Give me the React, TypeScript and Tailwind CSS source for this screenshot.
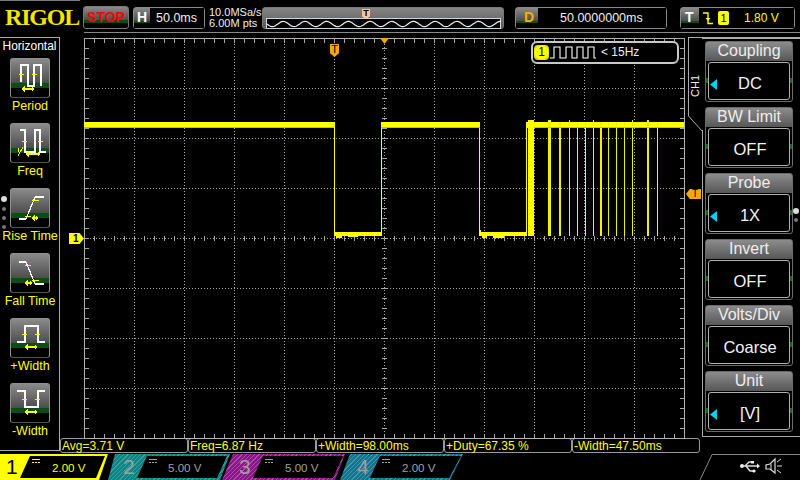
import type { ReactNode } from "react";

const GRAD =
  "bg-[linear-gradient(#8a8a8a_0,#4c4c4c_64%,#0b4d12_64%,#0b4d12_76%,#000_76%)]";

function Arrow({ x1, x2, y }: { x1: number; x2: number; y: number }) {
  return (
    <g fill="#ffff00" stroke="none">
      <rect x={x1 + 1} y={y - 1} width={x2 - x1 - 2} height={2} />
      <path d={`M${x1} ${y} l3.5 -3 v6 z M${x2} ${y} l-3.5 -3 v6 z`} />
    </g>
  );
}

function Marks({ y, xs, w = 5 }: { y: number; xs: number[]; w?: number }) {
  return (
    <g fill="#ffff00" stroke="none">
      {xs.map((x) => (
        <rect key={x} x={x} y={y} width={w} height={1} />
      ))}
    </g>
  );
}

const ICONS: Record<string, ReactNode> = {
  Period: (
    <>
      <path d="M11 24V7H18V28H24V7H31V28" />
      <Marks y={16} xs={[9, 22]} />
      <Arrow x1={11} x2={25} y={31} />
    </>
  ),
  Freq: (
    <>
      <path d="M10 7H15V29H25V7H30V29H36" />
      <Marks y={18} xs={[12, 28]} />
      <path d="M8 25V29M13 24L8 33" stroke="#ffff00" strokeWidth={1} fill="none" />
      <Arrow x1={15} x2={31} y={31} />
    </>
  ),
  Rise: (
    <>
      <path d="M9 31H16L25 9H34" />
      <Marks y={12} xs={[22]} w={7} />
      <Marks y={28} xs={[15]} w={6} />
      <Arrow x1={21} x2={29} y={30} />
    </>
  ),
  Fall: (
    <>
      <path d="M9 9H16L25 31H34" />
      <Marks y={12} xs={[15]} w={6} />
      <Marks y={27} xs={[22]} w={7} />
      <Arrow x1={14} x2={23} y={30} />
    </>
  ),
  PWidth: (
    <>
      <path d="M7 24H15V8H28V24H35" />
      <Marks y={16} xs={[12, 25]} />
      <Arrow x1={14} x2={28} y={29} />
    </>
  ),
  NWidth: (
    <>
      <path d="M7 8H15V24H28V8H35" />
      <Marks y={16} xs={[12, 25]} />
      <Arrow x1={14} x2={28} y={29} />
    </>
  ),
};

const MEASURES = [
  { icon: "Period", label: "Period" },
  { icon: "Freq", label: "Freq" },
  { icon: "Rise", label: "Rise Time" },
  { icon: "Fall", label: "Fall Time" },
  { icon: "PWidth", label: "+Width" },
  { icon: "NWidth", label: "-Width" },
];

function MeasureButton({ icon, label }: { icon: string; label: string }) {
  return (
    <div className="flex h-[65px] flex-col items-center">
      <div className={`h-10 w-10 rounded-[3px] border border-[#8f8f8f] border-b-[#4a5a4a] ${GRAD}`}>
        <svg width="38" height="38" viewBox="1 1 38 38" fill="none" stroke="#fff" strokeWidth={1.2} shapeRendering="crispEdges">
          {ICONS[icon]}
        </svg>
      </div>
      <div className="text-[12.5px] leading-[16px] whitespace-nowrap text-[#ffff00]">{label}</div>
    </div>
  );
}

function SideButton({ title, value, arrow }: { title: string; value: string; arrow?: boolean }) {
  return (
    <div className="relative flex h-[61px] w-[88px] flex-col rounded-[3px] border border-[#6a6a6a] bg-[linear-gradient(#8c8c8c_0,#555_33%,#000_33%)]">
      <div className="h-[20px] text-center text-[16px] leading-[18px] text-[#eee]">{title}</div>
      <div className="relative mx-[2px] flex h-[38px] items-center justify-center rounded-[3px] border border-[#b0b0b0] bg-black pt-[5px] pl-[2px] text-[16.5px] text-[#f2f2f2]">
        {arrow && <div className="absolute top-[16px] left-[1px] h-[11px] w-[7px] bg-[#00d2f2] [clip-path:polygon(100%_0,100%_100%,0_50%)]" />}
        {value}
      </div>
      <div className="absolute top-[36px] left-0 h-[5px] w-[2px] bg-[#0b6d12]" />
      <div className="absolute top-[36px] right-0 h-[5px] w-[2px] bg-[#0b6d12]" />
    </div>
  );
}

function Scope() {
  const xs = Array.from({ length: 61 }, (_, i) => 84 + i * 10);
  const ys = Array.from({ length: 41 }, (_, i) => 38 + i * 10);
  const edges: [number, number, number][] = [
    [548, 3, 120],
    [559, 2, 122],
    [569, 1, 120],
    [577, 1, 122],
    [585, 1, 122],
    [593, 1, 120],
    [600, 2, 122],
    [608, 1, 122],
    [616, 1, 122],
    [624, 1, 122],
    [632, 1, 120],
    [647, 2, 120],
    [657, 1, 122],
  ];
  return (
    <svg width="604" height="401" viewBox="84 38 604 401" shapeRendering="crispEdges" className="block">
      <g stroke="#a8a8a8" strokeWidth={1} strokeDasharray="1 2">
        {[134, 184, 234, 284, 334, 384, 434, 484, 534, 584, 634].map((x) => (
          <line key={x} x1={x + 0.5} y1={38} x2={x + 0.5} y2={438} />
        ))}
        {[88, 138, 188, 238, 288, 338, 388].map((y) => (
          <line key={y} x1={84} y1={y + 0.5} x2={684} y2={y + 0.5} />
        ))}
      </g>
      <g stroke="#a8a8a8" strokeWidth={1}>
        <path d="M84.5 38V438.5H684.5V38.5H84.5" fill="none" stroke="#b4b4b4" />
        {xs.map((x) => (
          <g key={x}>
            <line x1={x + 0.5} y1={38} x2={x + 0.5} y2={43} />
            <line x1={x + 0.5} y1={434} x2={x + 0.5} y2={438} />
            <line x1={x + 0.5} y1={236} x2={x + 0.5} y2={241} />
          </g>
        ))}
        {ys.map((y) => (
          <g key={y}>
            <line x1={84} y1={y + 0.5} x2={89} y2={y + 0.5} />
            <line x1={680} y1={y + 0.5} x2={684} y2={y + 0.5} />
            <line x1={382} y1={y + 0.5} x2={387} y2={y + 0.5} />
          </g>
        ))}
      </g>
      <g fill="#ffff00">
        <rect x={84} y={122} width={250} height={6} />
        <rect x={381} y={122} width={99} height={6} />
        <rect x={526} y={122} width={158} height={6} />
        <rect x={334} y={232} width={48} height={4} />
        <rect x={479} y={232} width={48} height={4} />
        <rect x={334} y={122} width={1} height={114} />
        <rect x={381} y={122} width={1} height={114} />
        <rect x={479} y={122} width={1} height={114} />
        <rect x={526} y={122} width={1} height={114} />
        <rect x={528} y={120} width={6} height={116} />
        {/* little spikes left by the acquisition along the low level */}
        <rect x={336} y={236} width={6} height={2} />
        <rect x={348} y={236} width={10} height={1} />
        <rect x={482} y={236} width={5} height={2} />
        <rect x={493} y={236} width={11} height={2} />
        <rect x={479} y={230} width={2} height={2} />
        {edges.map(([x, w, top]) => (
          <rect key={x} x={x} y={top} width={w} height={236 - top} fill="#f2f200" />
        ))}
      </g>
      <g fill="#c8c800">
        <rect x={84} y={127} width={250} height={1} />
        <rect x={381} y={127} width={99} height={1} />
        <rect x={534} y={127} width={150} height={1} />
      </g>
    </svg>
  );
}

function Wave() {
  const pts = Array.from({ length: 236 }, (_, i) => `${i},${(5 + 2.6 * Math.sin((i * 2 * Math.PI) / 21.7)).toFixed(1)}`);
  return (
    <svg width="234" height="9" className="block">
      <polyline points={pts.join(" ")} fill="none" stroke="#f0f0f0" strokeWidth={1.2} />
    </svg>
  );
}

const CH_TABS = [
  {
    digit: "1",
    value: "2.00 V",
    box: "w-[108px] bg-[#ffff00] [clip-path:polygon(0_0,108px_0,99px_26px,0_26px)]",
    digitBox: "w-[20px] pl-[6px] text-black",
    inner: "w-[85px] [clip-path:polygon(10px_0,85px_0,76px_100%,0_100%)]",
    text: "ml-[12px] text-[#ffff00]",
    dc: "#ffff00",
  },
  {
    digit: "2",
    value: "5.00 V",
    box: "w-[122px] bg-[repeating-linear-gradient(135deg,#0c8484_0,#0c8484_2px,#3f9f9f_2px,#3f9f9f_3px)] [clip-path:polygon(7px_0,122px_0,112px_26px,0_26px)]",
    digitBox: "w-[29px] pl-[15px] text-[#a0a0a0]",
    inner: "w-[90px] [clip-path:polygon(10px_0,90px_0,80px_100%,0_100%)]",
    text: "ml-[11px] text-[#a0a0a0]",
    dc: "#a0a0a0",
  },
  {
    digit: "3",
    value: "5.00 V",
    box: "-ml-[8px] w-[123px] bg-[repeating-linear-gradient(135deg,#8a1488_0,#8a1488_2px,#a850a6_2px,#a850a6_3px)] [clip-path:polygon(11px_0,123px_0,113px_26px,0_26px)]",
    digitBox: "w-[31px] pl-[17px] text-[#a0a0a0]",
    inner: "w-[90px] [clip-path:polygon(10px_0,90px_0,80px_100%,0_100%)]",
    text: "ml-[12px] text-[#a0a0a0]",
    dc: "#a0a0a0",
  },
  {
    digit: "4",
    value: "2.00 V",
    box: "-ml-[5px] w-[123px] bg-[repeating-linear-gradient(135deg,#11748f_0,#11748f_2px,#4a94aa_2px,#4a94aa_3px)] [clip-path:polygon(10px_0,123px_0,110px_26px,0_26px)]",
    digitBox: "w-[30px] pl-[17px] text-[#a0a0a0]",
    inner: "w-[91px] [clip-path:polygon(10px_0,91px_0,79px_100%,0_100%)]",
    text: "ml-[12px] text-[#a0a0a0]",
    dc: "#a0a0a0",
  },
];

export default function App() {
  return (
    <div className="relative flex h-[480px] w-[800px] flex-col overflow-hidden bg-black font-['Liberation_Sans',Arial,sans-serif] text-white">
      {/* top bar */}
      <div className="flex h-[32px] items-start">
        <div className="h-[32px] w-[80px] border-t border-[#777] pl-[5px] font-['Liberation_Serif',serif] text-[24px] leading-[33px] font-bold tracking-[-1.2px] text-[#f4e400]">
          RIGOL
        </div>
        <div className="mt-[6px] ml-[3px] h-[23px] w-[46px] rounded-[3px] border border-[#777] bg-[linear-gradient(#8a8a8a_0,#4c4c4c_62%,#0b4d12_62%,#0b4d12_78%,#000_78%)] text-center text-[14px] leading-[20px] font-bold text-[#ff0000]">
          STOP
        </div>
        <div className="mt-[7px] ml-[4px] flex h-[22px] w-[72px] rounded-[3px] border border-[#888]">
          <div className={`w-[16px] pl-[3px] text-[14px] leading-[19px] font-bold ${GRAD}`}>H</div>
          <div className="flex-1 rounded-tl-[4px] bg-black pl-[6px] text-[12.5px] leading-[20px] text-[#eee]">50.0ms</div>
        </div>
        <div className="mt-[7px] ml-[4px] w-[53px] text-[11px] leading-[11px] whitespace-nowrap text-[#eee]">
          10.0MSa/s
          <br />
          6.00M pts
        </div>
        <div className="relative mt-[7px] h-[22px] w-[242px] rounded-[3px] border border-[#777] bg-[linear-gradient(#858585,#5a5a5a)] px-[3px] pt-[10px]">
          <div className="w-[235px] border border-[#c0d8e8] bg-black">
            <Wave />
          </div>
          <div className="absolute top-[1px] left-[99px] h-[10px] w-[8px] bg-[#ffbf9f] text-center text-[9px] leading-[9px] font-bold text-black [clip-path:polygon(0_0,100%_0,100%_75%,50%_100%,0_75%)]">
            T
          </div>
        </div>
        <div className="mt-[7px] ml-[11px] flex h-[22px] w-[152px] rounded-[3px] border border-[#888]">
          <div className={`w-[22px] pl-[8px] text-[14px] leading-[19px] font-bold text-[#f5b000] ${GRAD}`}>D</div>
          <div className="flex-1 rounded-tl-[4px] bg-black pl-[22px] text-[12.5px] leading-[20px] text-[#eee]">50.0000000ms</div>
        </div>
        <div className="mt-[7px] ml-[13px] flex h-[22px] w-[115px] rounded-[3px] border border-[#888]">
          <div className={`w-[18px] pl-[4px] text-[14px] leading-[19px] font-bold ${GRAD}`}>T</div>
          <div className="flex flex-1 items-center rounded-tl-[4px] bg-black pl-[3px]">
            <svg width="12" height="14" viewBox="0 0 12 14" fill="none" stroke="#ffff00" strokeWidth={1.4}>
              <path d="M1 2H6V12.5H11" />
              <path d="M3.5 7H8.5L6 10Z" fill="#ffff00" stroke="none" />
            </svg>
            <div className="ml-[4px] h-[14px] w-[11px] rounded-[2px] bg-[#ffff00] text-center text-[11px] leading-[14px] text-black">1</div>
            <div className="ml-[15px] text-[12px] leading-[20px] text-[#ffff00]">1.80 V</div>
          </div>
        </div>
      </div>
      <div className="ml-[84px] h-px bg-[#888]" />

      {/* body */}
      <div className="mt-[4px] flex h-[417px]">
        <div className="relative h-[414px] w-[60px] border-t border-r border-b border-[#aaa]">
          <div className="h-[20px] text-center text-[12px] leading-[17px] text-white">Horizontal</div>
          {MEASURES.map((m) => (
            <div key={m.icon} className="pl-[1px]">
              <MeasureButton icon={m.icon} label={m.label} />
            </div>
          ))}
          <div className="absolute top-[158px] left-[1px] flex flex-col items-center gap-[5px]">
            <div className="h-[6px] w-[6px] rounded-full bg-[#ddd]" />
            <div className="h-[4px] w-[4px] rounded-full bg-[#777]" />
            <div className="h-[4px] w-[4px] rounded-full bg-[#777]" />
            <div className="h-[4px] w-[4px] rounded-full bg-[#777]" />
          </div>
        </div>

        <div className="w-[628px]">
          <div className="relative mt-px ml-[24px] h-[400px] w-[604px]">
            <Scope />
            {/* trigger markers */}
            <div className="absolute top-[6px] left-[246px] h-[13px] w-[9px] bg-[#f5a800] text-center text-[11px] leading-[11px] text-black [clip-path:polygon(0_0,100%_0,100%_72%,50%_100%,0_72%)]">
              T
            </div>
            <div className="absolute top-0 left-[296px] h-[6px] w-[9px] bg-[#f5a800] [clip-path:polygon(0_0,100%_0,50%_100%)]" />
            <div className="absolute top-[195px] left-[-15px] h-[11px] w-[15px] bg-[#ffff00] pl-[4px] text-[10px] leading-[11px] font-bold text-black [clip-path:polygon(0_0,70%_0,100%_50%,70%_100%,0_100%)]">
              1
            </div>
            <div className="absolute top-[151px] left-[602px] z-10 h-[10px] w-[15px] bg-[#f5a800] pl-[6px] text-[10px] leading-[10px] text-black [clip-path:polygon(25%_0,100%_0,100%_100%,25%_100%,0_50%)]">
              T
            </div>
            {/* frequency counter pill */}
            <div className="absolute top-[3px] left-[447px] flex h-[23px] w-[148px] items-center rounded-[6px] border-2 border-[#c8c8c8] bg-black pl-[1px]">
              <div className="h-[15px] w-[15px] rounded-[4px] bg-[radial-gradient(#ffff00_55%,#b8b800)] text-center text-[12px] leading-[15px] text-black">1</div>
              <svg width="46" height="13" viewBox="0 0 46 13" fill="none" stroke="#fff" strokeWidth={1.1} className="ml-px">
                <path d="M0 12H4V1H10V12H16V1H22V12H27V1H33V12H38V1H44V12H46" />
              </svg>
              <div className="ml-[5px] text-[12px] leading-[15px] whitespace-pre text-[#eee]">{"< 15Hz"}</div>
            </div>
          </div>
          {/* measurements */}
          <div className="flex w-[640px]">
            {["Avg=3.71 V", "Freq=6.87 Hz", "+Width=98.00ms", "+Duty=67.35 %", "-Width=47.50ms"].map((t) => (
              <div key={t} className="h-[15px] w-[128px] flex-none rounded-[3px] border border-[#999] bg-black pl-px text-[12px] leading-[14px] text-[#ffff00]">
                {t}
              </div>
            ))}
          </div>
        </div>

        <div className="relative flex h-[401px] w-[112px] flex-none">
          <div className="relative w-[14px]">
            <svg width="14" height="401" className="absolute top-0 left-0" fill="none" stroke="#aaa">
              <path d="M0.5 0V79L14 94" />
            </svg>
            <div className="absolute top-[45px] left-[-1px] w-[16px] rotate-[-90deg] text-center text-[11px] leading-[14px] text-[#eee]">CH1</div>
          </div>
          <div className="mt-px flex-1 border-t border-[#aaa]" />
          <div className="absolute top-0 left-[14px] h-[400px] w-[98px]">
            <div className="absolute top-0 right-0 left-[-14px] h-px bg-[#aaa]" />
            <div className="flex h-[400px] flex-col gap-[5px] border-b border-[#aaa] pt-[4px] pl-[3px]">
              <SideButton title="Coupling" value="DC" arrow />
              <SideButton title="BW Limit" value="OFF" />
              <SideButton title="Probe" value="1X" arrow />
              <SideButton title="Invert" value="OFF" />
              <SideButton title="Volts/Div" value="Coarse" />
              <SideButton title="Unit" value="[V]" arrow />
            </div>
            <div className="absolute top-[93px] left-0 h-[307px] w-px bg-[#aaa]" />
            <div className="absolute top-[171px] right-[1px] flex flex-col items-center gap-[4px]">
              <div className="h-[6px] w-[6px] rounded-full bg-[#ddd]" />
              <div className="h-[4px] w-[4px] rounded-full bg-[#777]" />
            </div>
          </div>
        </div>
      </div>

      {/* channel tabs */}
      <div className="flex h-[26px]">
        {CH_TABS.map((c) => (
          <div key={c.digit} className={`flex h-[26px] flex-none ${c.box}`}>
            <div className={`flex-none text-[21px] leading-[26px] ${c.digitBox}`}>{c.digit}</div>
            <div className={`my-[2px] flex h-[22px] flex-none bg-black ${c.inner}`}>
              <svg width="8" height="5" className="mt-[3px] ml-[12px] flex-none" fill="none" stroke={c.dc}>
                <path d="M0 0.5H8" />
                <path d="M0 3.5H8" strokeDasharray="2 1" />
              </svg>
              <div className={`text-[11.6px] leading-[24px] whitespace-nowrap ${c.text}`}>{c.value}</div>
            </div>
          </div>
        ))}
        <svg width="105" height="26" viewBox="695 454 105 26" className="mr-0 ml-auto" fill="none" stroke="#ddd">
          <path d="M700 480L712 454.5H800" stroke="#888" />
          <g strokeWidth={1.4}>
            <circle cx={742} cy={466} r={2} fill="#eee" stroke="none" />
            <path d="M742 466H757M745 466L749 462H752M746 466L750 471H753" />
            <path d="M757 463.5L760 466L757 468.5Z" fill="#eee" stroke="none" />
            <rect x={751} y={461} width={3} height={2.5} fill="#eee" stroke="none" />
            <circle cx={754} cy={471} r={1.6} fill="#eee" stroke="none" />
          </g>
          <path d="M766 465V469L770 469L775 473V459L770 464Z" strokeWidth={1.2} />
          <path d="M771 464V470" strokeWidth={1} />
          <path d="M777 462L781 459M777 466H782M777 470L781 473" strokeWidth={1} />
        </svg>
      </div>
    </div>
  );
}
